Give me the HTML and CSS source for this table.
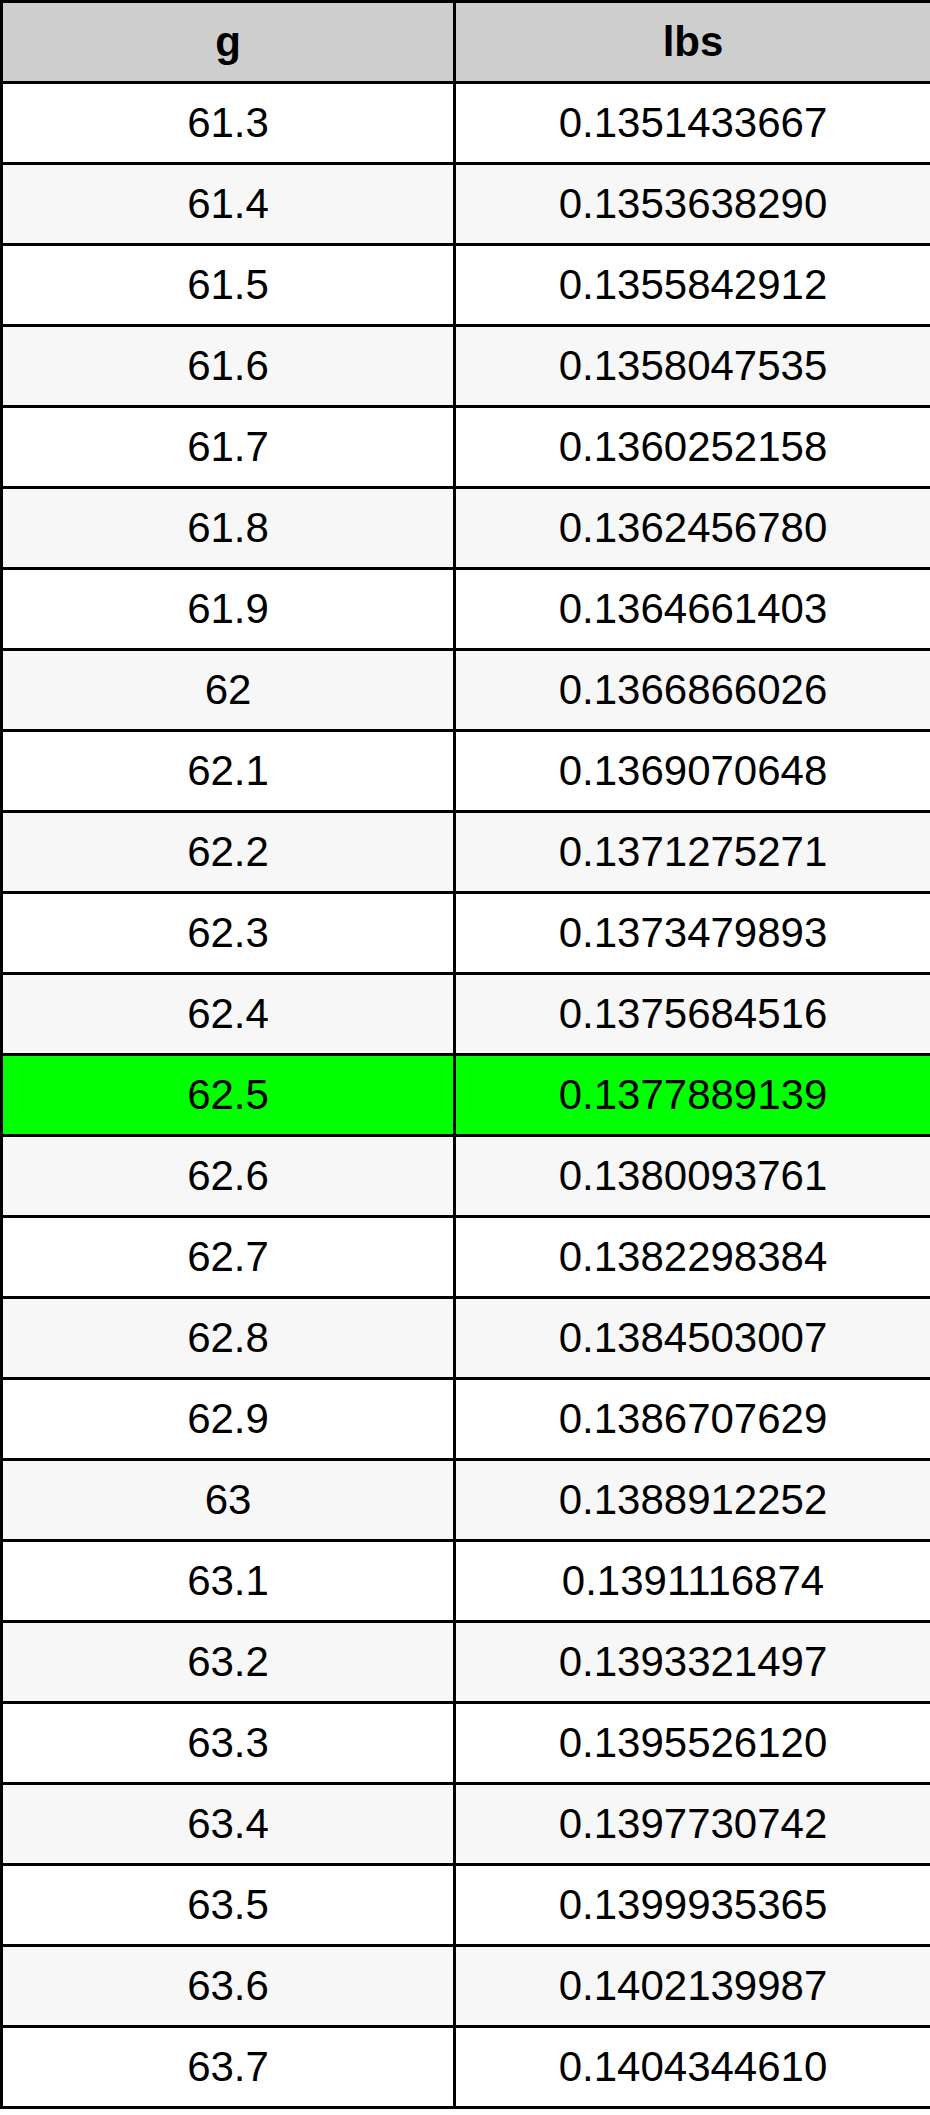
FILE: index.html
```html
<!DOCTYPE html>
<html>
<head>
<meta charset="utf-8">
<link rel="stylesheet" href="styles.css">
</head>
<body>
<table class="conv">
<colgroup><col class="c1"><col class="c2"></colgroup>
<thead><tr><th>g</th><th>lbs</th></tr></thead>
<tbody>
<tr><td>61.3</td><td>0.1351433667</td></tr>
<tr><td>61.4</td><td>0.1353638290</td></tr>
<tr><td>61.5</td><td>0.1355842912</td></tr>
<tr><td>61.6</td><td>0.1358047535</td></tr>
<tr><td>61.7</td><td>0.1360252158</td></tr>
<tr><td>61.8</td><td>0.1362456780</td></tr>
<tr><td>61.9</td><td>0.1364661403</td></tr>
<tr><td>62</td><td>0.1366866026</td></tr>
<tr><td>62.1</td><td>0.1369070648</td></tr>
<tr><td>62.2</td><td>0.1371275271</td></tr>
<tr><td>62.3</td><td>0.1373479893</td></tr>
<tr><td>62.4</td><td>0.1375684516</td></tr>
<tr class="hl"><td>62.5</td><td>0.1377889139</td></tr>
<tr><td>62.6</td><td>0.1380093761</td></tr>
<tr><td>62.7</td><td>0.1382298384</td></tr>
<tr><td>62.8</td><td>0.1384503007</td></tr>
<tr><td>62.9</td><td>0.1386707629</td></tr>
<tr><td>63</td><td>0.1388912252</td></tr>
<tr><td>63.1</td><td>0.1391116874</td></tr>
<tr><td>63.2</td><td>0.1393321497</td></tr>
<tr><td>63.3</td><td>0.1395526120</td></tr>
<tr><td>63.4</td><td>0.1397730742</td></tr>
<tr><td>63.5</td><td>0.1399935365</td></tr>
<tr><td>63.6</td><td>0.1402139987</td></tr>
<tr><td>63.7</td><td>0.1404344610</td></tr>
</tbody>
</table>
</body>
</html>
```
FILE: styles.css
```css
html, body {
  margin: 0;
  padding: 0;
  background: #fff;
}
.conv {
  border-collapse: collapse;
  table-layout: fixed;
  width: 930px;
  font-family: "Liberation Sans", Arial, sans-serif;
  font-size: 42px;
  color: #000;
}
.c1 { width: 453px; }
.c2 { width: 477px; }
.conv th, .conv td {
  border: 3px solid #000;
  height: 81px;
  padding: 0;
  text-align: center;
  vertical-align: middle;
  box-sizing: border-box;
}
.conv th {
  background: #cecece;
  font-weight: bold;
}
.conv tbody tr:nth-child(odd) td { background: #fff; }
.conv tbody tr:nth-child(even) td { background: #f7f7f7; }
.conv tbody tr.hl td { background: #00ff00; }
```
